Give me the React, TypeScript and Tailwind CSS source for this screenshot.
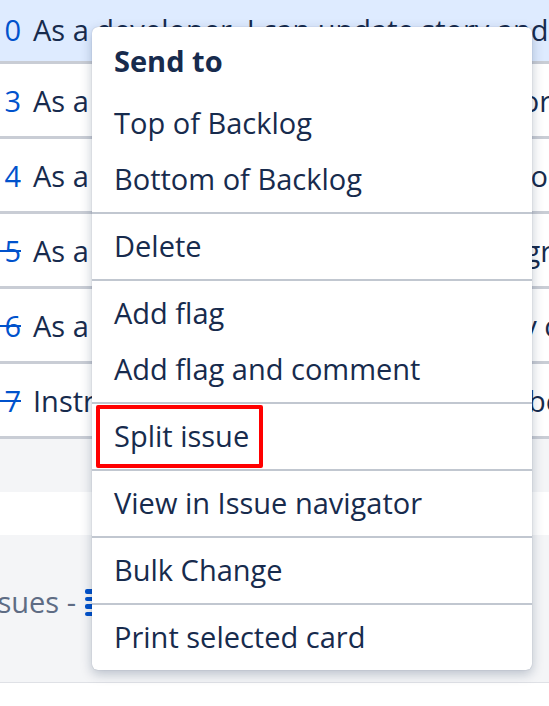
import React from 'react';

type Issue = { id: string; summary: string; selected?: boolean; done?: boolean };

const issues: Issue[] = [
  { id: 'TIS-10', summary: 'As a developer, I can update story and task status with drag and drop', selected: true },
  { id: 'TIS-13', summary: 'As a developer, I can see the board for the active sprint' },
  { id: 'TIS-14', summary: 'As a user, I want to sort issues by id to plan work' },
  { id: 'TIS-15', summary: 'As a team lead I can assign issues in groups', done: true },
  { id: 'TIS-16', summary: 'As a manager, I can sort the board by component', done: true },
  { id: 'TIS-17', summary: 'Instructions for using this board can be found here', done: true },
];

const sections: string[][] = [
  ['Top of Backlog', 'Bottom of Backlog'],
  ['Delete'],
  ['Add flag', 'Add flag and comment'],
  ['Split issue'],
  ['View in Issue navigator'],
  ['Bulk Change'],
  ['Print selected card'],
];

const IssueRow: React.FC<{ issue: Issue }> = ({ issue }) => (
  <div
    className={`flex items-center whitespace-nowrap overflow-hidden border-b-[3px] border-[#c9cdd5] ${
      issue.selected ? 'h-[64px] bg-[#deebff] pb-[2px]' : 'h-[75px] bg-white'
    }`}
  >
    {/* issue key is cut off at the left edge */}
    <div className="w-[21px] shrink-0 flex justify-end overflow-hidden">
      <span className={`shrink-0 text-[#0052cc] ${issue.done ? 'line-through' : ''}`}>{issue.id}</span>
    </div>
    <span className="ml-[12px]">{issue.summary}</span>
  </div>
);

const ContextMenu: React.FC = () => (
  <div className="absolute left-[92px] top-[27px] w-[440px] bg-white rounded-[6px] shadow-[0_4px_12px_rgba(9,30,66,0.25),0_0_1px_rgba(9,30,66,0.31)] overflow-hidden">
    {sections.map((items, i) => (
      <div key={i} className={`relative pt-[5px] pb-[4px] ${i > 0 ? 'border-t-2 border-[#c1c7d0]' : ''}`}>
        {i === 0 && <div className="h-[64px] pl-[22px] pb-[8px] flex items-center font-bold">Send to</div>}
        {items.map((label) => (
          <div key={label} className="h-[56px] pl-[22px] pb-[4px] flex items-center hover:bg-[#f4f5f7]">
            {label}
          </div>
        ))}
        {items[0] === 'Split issue' && (
          <div className="absolute left-[4px] top-[1px] w-[167px] h-[63px] border-4 border-[#ff0000] rounded-[2px]" />
        )}
      </div>
    ))}
  </div>
);

export default function App() {
  return (
    <div className="relative w-[549px] h-[706px] overflow-hidden bg-white text-[29px] leading-none text-[#172b4d] font-['Open_Sans',sans-serif]">
      <div className="shadow-[0_1px_2px_rgba(9,30,66,0.2)]">
        {issues.map((issue) => (
          <IssueRow key={issue.id} issue={issue} />
        ))}
      </div>
      <div className="h-[53px] bg-[#f4f5f7]" />
      <div className="h-[43px] bg-white" />
      <div className="h-[148px] bg-[#f4f5f7] border-b border-[#dfe1e6] flex items-center pb-[14px]">
        <div className="w-[76px] shrink-0 flex justify-end overflow-hidden whitespace-nowrap">
          <span className="shrink-0 text-[#5e6c84]">4 issues - </span>
        </div>
        <div className="ml-[9px] flex flex-col gap-[3px] mt-[2px]">
          <span className="block w-[10px] h-[4.5px] rounded-[2px] bg-[#0052cc]" />
          <span className="block w-[10px] h-[4.5px] rounded-[2px] bg-[#0052cc]" />
          <span className="block w-[10px] h-[4.5px] rounded-[2px] bg-[#0052cc]" />
          <span className="block w-[10px] h-[4.5px] rounded-[2px] bg-[#0052cc]" />
        </div>
      </div>
      <ContextMenu />
    </div>
  );
}
